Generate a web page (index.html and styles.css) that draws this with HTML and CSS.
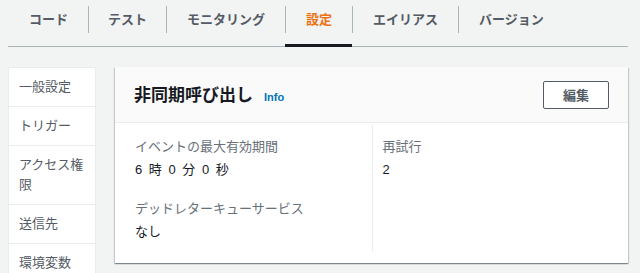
FILE: index.html
```html
<!DOCTYPE html>
<html lang="ja">
<head>
  <meta charset="UTF-8" />
  <meta name="viewport" content="width=device-width, initial-scale=1.0" />
  <title>設定</title>
  <link rel="stylesheet" href="styles.css">
</head>
<body>
  <div class="page">
    <div class="tabs">
      <div class="tab"><span class="tab-label first">コード</span></div>
      <div class="tab"><span class="tab-label narrow">テスト</span></div>
      <div class="tab"><span class="tab-label">モニタリング</span></div>
      <div class="tab active"><span class="tab-label">設定</span></div>
      <div class="tab"><span class="tab-label">エイリアス</span></div>
      <div class="tab"><span class="tab-label">バージョン</span></div>
    </div>
    <div class="layout">
      <ul class="side-nav">
        <li>一般設定</li>
        <li>トリガー</li>
        <li>アクセス権限</li>
        <li>送信先</li>
        <li>環境変数</li>
      </ul>
      <div class="card">
        <div class="card-header">
          <div class="title"><h2>非同期呼び出し</h2><a class="info">Info</a></div>
          <button class="btn">編集</button>
        </div>
        <div class="card-body">
          <div class="col">
            <div class="field"><div class="label">イベントの最大有効期間</div><div class="value wide">6 時 0 分 0 秒</div></div>
            <div class="field"><div class="label">デッドレターキューサービス</div><div class="value">なし</div></div>
          </div>
          <div class="col right">
            <div class="field"><div class="label">再試行</div><div class="value">2</div></div>
          </div>
        </div>
      </div>
    </div>
  </div>
</body>
</html>
```

FILE: styles.css
```css
*{margin:0;padding:0;box-sizing:border-box}
body{font-family:"Liberation Sans","Noto Sans CJK JP",sans-serif;background:#f2f3f3;color:#16191f;font-size:13px;overflow:hidden}
.page{padding:0 12px 0 8px}
/* tabs */
.tabs{display:flex;border-bottom:1px solid #aab7b8;padding-top:6px}
.tab{border-bottom:3px solid transparent;margin-bottom:-1px;padding-bottom:11px}
.tab.active{border-bottom-color:#16191f}
.tab-label{display:block;height:27px;line-height:27px;padding:0 20px;border-left:1px solid #aab7b8;font-weight:700;color:#545b64;font-size:13px}
.tab-label.first{border-left-color:transparent}
.tab-label.narrow{padding:0 19px}
.tab.active .tab-label{color:#ec7211}
/* layout */
.layout{display:flex;gap:19px;margin-top:20px;align-items:flex-start}
.side-nav{list-style:none;width:88px;background:#fff;border:1px solid #eaeded;border-bottom:none;flex-shrink:0}
.side-nav li{padding:9px 10px 9px 10px;line-height:20px;border-bottom:1px solid #eaeded;color:#545b64}
/* card */
.card{flex:1;background:#fff;box-shadow:0 1px 1px 0 rgba(0,28,36,.3),1px 1px 1px 0 rgba(0,28,36,.15),-1px 1px 1px 0 rgba(0,28,36,.15)}
.card-header{display:flex;align-items:center;justify-content:space-between;height:56px;padding:0 19px 0 19px;background:#fafafa;border-bottom:1px solid #eaeded}
.title{display:flex;align-items:baseline;gap:11px}
.title h2{font-size:17px;font-weight:700;color:#16191f;margin-top:-2px}
.info{color:#0073bb;font-weight:700;font-size:11px}
.btn{width:66px;height:28px;border:1px solid #545b64;border-radius:2px;background:#fff;color:#545b64;font-weight:700;font-size:13px;font-family:inherit}
.card-body{display:grid;grid-template-columns:1fr 1fr;padding:2px 20px 11px}
.col{padding:12px 0 10px;display:flex;flex-direction:column;gap:19px}
.col.right{border-left:1px solid #eaeded;padding-left:10px}
.label{line-height:20px;color:#687078}
.value{line-height:20px;margin-top:3px}
.value.wide{word-spacing:3px}
```
